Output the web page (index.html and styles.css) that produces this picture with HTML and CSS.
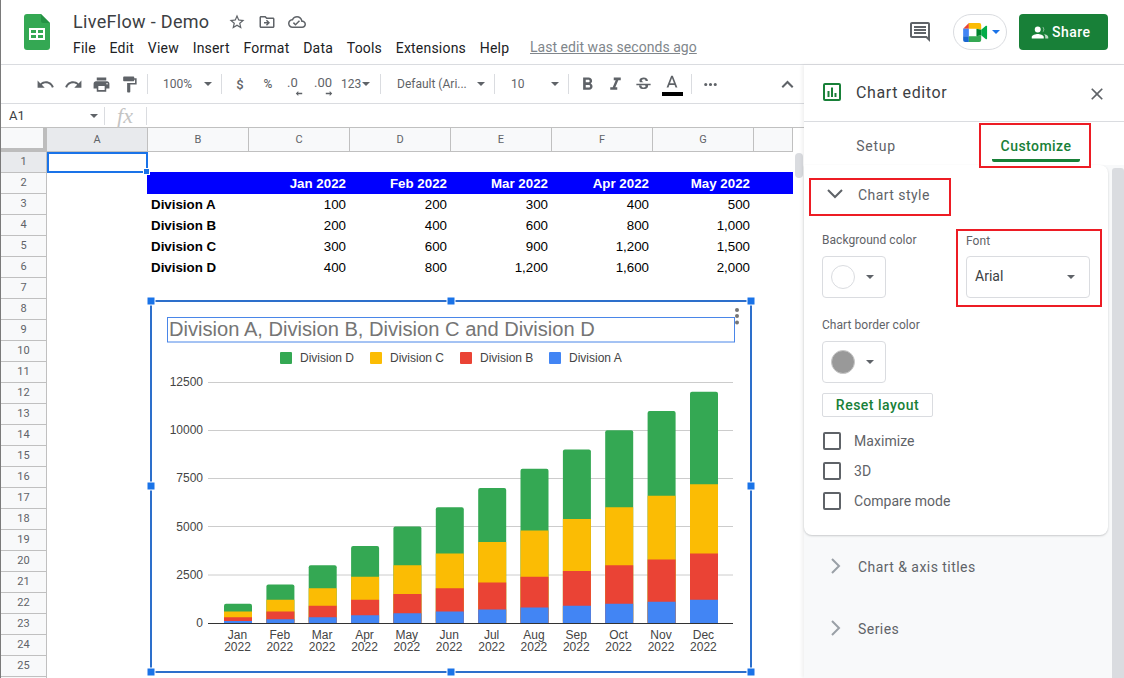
FILE: index.html
```html
<!DOCTYPE html>
<html lang="en">
<head>
<meta charset="utf-8">
<title>LiveFlow - Demo</title>
<link rel="stylesheet" href="styles.css">
</head>
<body>
<div class="app">
  <header class="topbar">
    <svg class="logo" viewBox="0 0 26 36"><path fill="#34a853" d="M3 0H17L26 9V33a3 3 0 0 1-3 3H3a3 3 0 0 1-3-3V3a3 3 0 0 1 3-3z"/><path fill="#188038" opacity=".55" d="M17 0L26 9H19a2 2 0 0 1-2-2z"/><path fill="#fff" fill-rule="evenodd" d="M5 14H21V26H5ZM7 16V19H12V16ZM14 16V19H19V16ZM7 21V24H12V21ZM14 21V24H19V21Z"/></svg>
    <div class="doc">
      <div class="title-row">
        <span class="doc-title">LiveFlow - Demo</span>
        <svg class="ic ic-star" viewBox="0 0 24 24"><path d="M22 9.24l-7.19-.62L12 2 9.19 8.63 2 9.24l5.46 4.73L5.82 21 12 17.27 18.18 21l-1.63-7.03L22 9.24zM12 15.4l-3.76 2.27 1-4.28-3.32-2.88 4.38-.38L12 6.1l1.71 4.04 4.38.38-3.32 2.88 1 4.28L12 15.4z"/></svg>
        <svg class="ic ic-move" viewBox="0 0 24 24"><path d="M20 6h-8l-2-2H4c-1.1 0-2 .9-2 2v12c0 1.1.9 2 2 2h16c1.1 0 2-.9 2-2V8c0-1.1-.9-2-2-2zm0 12H4V6h5.17l2 2H20v10z"/><path d="M12.16 12H8v2h4.16l-1.59 1.59L11.99 17 16 13l-4.01-4-1.42 1.41z"/></svg>
        <svg class="ic ic-cloud" viewBox="0 0 24 24"><path d="M19.35 10.04C18.67 6.59 15.64 4 12 4 9.11 4 6.6 5.64 5.35 8.04 2.34 8.36 0 10.91 0 14c0 3.31 2.69 6 6 6h13c2.76 0 5-2.24 5-5 0-2.64-2.05-4.78-4.65-4.96zM19 18H6c-2.21 0-4-1.79-4-4 0-2.05 1.53-3.76 3.56-3.97l1.07-.11.5-.95C8.08 7.14 9.94 6 12 6c2.62 0 4.88 1.86 5.39 4.43l.3 1.5 1.53.11c1.56.1 2.78 1.41 2.78 2.96 0 1.65-1.35 3-3 3zm-9-3.82l-2.09-2.09L6.5 13.5 10 17l6.01-6.01-1.41-1.41z"/></svg>
      </div>
      <nav class="menu">
        <span>File</span><span>Edit</span><span>View</span><span>Insert</span><span>Format</span><span>Data</span><span>Tools</span><span>Extensions</span><span>Help</span>
        <a class="last-edit">Last edit was seconds ago</a>
      </nav>
    </div>
    <div class="top-actions">
      <svg class="ic ic-comment" viewBox="0 0 24 24"><path d="M21.99 4c0-1.1-.89-2-1.99-2H4c-1.1 0-2 .9-2 2v12c0 1.1.9 2 2 2h14l4 4-.01-18zM20 4v13.17L18.83 16H4V4h16zM6 12h12v2H6zm0-3h12v2H6zm0-3h12v2H6z"/></svg>
      <div class="meet">
        <svg class="meet-logo" viewBox="0 0 26 20"><path fill="#ea4335" d="M6 0L0 6H6Z"/><path fill="#fbbc04" d="M6 0H17a2 2 0 0 1 2 2V7L14 6H6Z"/><path fill="#4285f4" d="M0 6H6V14H0Z"/><path fill="#1967d2" d="M0 14H6V20H2a2 2 0 0 1-2-2Z"/><path fill="#34a853" d="M6 14H14L19 13V18a2 2 0 0 1-2 2H6Z"/><path fill="#00832d" d="M14 6L19 7V13L14 14Z"/><path fill="#00ac47" d="M19 7L24 3a.8.8 0 0 1 1.2.6V16.400a.8.8 0 0 1-1.200.6L19 13Z"/></svg>
        <i class="caret caret-blue"></i>
      </div>
      <button class="share"><svg class="share-ic" viewBox="0 0 24 20"><path fill="#fff" opacity=".7" d="M15 2.200a4 4 0 0 1 0 7.600 5.500 5.500 0 0 0 0-7.600zM17 12c3 .5 6 1.800 6 4v2h-4v-2c0-1.600-.8-3-2-4z"/><path fill="#fff" d="M9 10a4 4 0 1 0 0-8 4 4 0 0 0 0 8zm0 2c-2.700 0-8 1.300-8 4v2h16v-2c0-2.700-5.300-4-8-4z"/></svg>Share</button>
    </div>
  </header>

  <div class="workspace">
    <main class="sheet">
      <div class="toolbar">
        <span class="tb"><svg class="tbi" viewBox="0 0 24 24"><path d="M12.500 8c-2.650 0-5.050.99-6.900 2.600L2 7v9h9l-3.620-3.620c1.390-1.160 3.160-1.880 5.120-1.880 3.540 0 6.550 2.310 7.600 5.500l2.370-.78C21.080 11.030 17.150 8 12.500 8z"/></svg></span>
        <span class="tb"><svg class="tbi" viewBox="0 0 24 24"><path d="M18.400 10.600C16.550 8.990 14.150 8 11.500 8c-4.650 0-8.580 3.030-9.960 7.220L3.900 16c1.050-3.190 4.050-5.500 7.600-5.500 1.950 0 3.730.72 5.120 1.880L13 16h9V7l-3.600 3.600z"/></svg></span>
        <span class="tb"><svg class="tbi" viewBox="0 0 24 24"><path d="M19 8H5c-1.660 0-3 1.340-3 3v6h4v4h12v-4h4v-6c0-1.660-1.340-3-3-3zm-3 11H8v-5h8v5zm3-7c-.55 0-1-.45-1-1s.45-1 1-1 1 .45 1 1-.45 1-1 1zm-1-9H6v4h12V3z"/></svg></span>
        <span class="tb"><svg class="tbi" viewBox="0 0 24 24"><path d="M18 4V3c0-.55-.45-1-1-1H5c-.55 0-1 .45-1 1v4c0 .55.45 1 1 1h12c.55 0 1-.45 1-1V6h1v4H9v11c0 .55.45 1 1 1h2c.55 0 1-.45 1-1v-9h8V4h-3z"/></svg></span>
        <i class="sep sep-a"></i>
        <span class="dd dd-zoom"><span>100%</span><i class="caret"></i></span>
        <i class="sep"></i>
        <span class="tb tb-first tb-text">$</span>
        <span class="tb tb-text tb-pct">%</span>
        <span class="tb dec dec-one"><span>.0</span><svg class="dec-arrow" viewBox="0 0 9 7"><path d="M3.500 0L0 3.500 3.500 7V4.500H9v-2H3.500z"/></svg></span>
        <span class="tb dec dec-two"><span>.00</span><svg class="dec-arrow" viewBox="0 0 9 7"><path d="M5.500 0L9 3.500 5.500 7V4.500H0v-2H5.500z"/></svg></span>
        <span class="num-fmt"><span>123</span><i class="caret"></i></span>
        <i class="sep sep-b"></i>
        <span class="dd dd-font"><span>Default (Ari...</span><i class="caret"></i></span>
        <i class="sep"></i>
        <span class="dd dd-size"><span>10</span><i class="caret"></i></span>
        <i class="sep"></i>
        <span class="tb tb-first"><svg class="tbi-lg" viewBox="0 0 24 24"><path d="M15.600 10.790c.97-.67 1.650-1.770 1.650-2.790 0-2.260-1.750-4-4-4H7v14h7.040c2.090 0 3.710-1.700 3.710-3.790 0-1.520-.86-2.820-2.150-3.420zM10 6.500h3c.83 0 1.500.67 1.500 1.500s-.67 1.500-1.500 1.500h-3v-3zm3.500 9H10v-3h3.500c.83 0 1.500.67 1.500 1.500s-.67 1.500-1.500 1.500z"/></svg></span>
        <span class="tb"><svg class="tbi-lg" viewBox="0 0 24 24"><path d="M10 4v3h2.210l-3.420 8H6v3h8v-3h-2.210l3.420-8H18V4z"/></svg></span>
        <span class="tb"><svg class="tbi" viewBox="0 0 24 24"><path d="M6.850 7.080C6.850 4.370 9.450 3 12.240 3c1.640 0 3 .49 3.900 1.280.77.65 1.460 1.730 1.460 3.240h-3.010c0-.31-.05-.59-.15-.85-.29-.86-1.200-1.280-2.250-1.280-1.860 0-2.340 1.020-2.340 1.700 0 .48.25.88.74 1.210.38.25.77.48 1.410.7H7.390c-.21-.34-.54-.89-.54-1.920zM21 13v-2H3v2h10.620c.5.220 1 .5 1 1.200 0 1-.81 1.440-2.280 1.440-1.540 0-2.930-.54-2.930-2.510H6.400c0 .55.08 1.130.24 1.580.81 2.290 3.240 3.090 5.600 3.090 2.350 0 5.520-.92 5.520-4.340 0-.36-.03-.46-.1-.46H21z"/></svg></span>
        <span class="tb tb-color"><svg class="tbi-a" viewBox="0 0 24 18"><path d="M11 1L5.500 15h2.250l1.120-3h6.250l1.120 3h2.250L13 1h-2zm-1.380 9L12 3.670 14.380 10H9.620z"/></svg><i class="color-bar"></i></span>
        <i class="sep sep-c"></i>
        <span class="tb tb-more"><svg class="tbi" viewBox="0 0 24 24"><path d="M6 10a2 2 0 1 0 0 4 2 2 0 0 0 0-4zm6 0a2 2 0 1 0 0 4 2 2 0 0 0 0-4zm6 0a2 2 0 1 0 0 4 2 2 0 0 0 0-4z"/></svg></span>
        <span class="tb tb-collapse"><svg class="tbi" viewBox="0 0 24 24"><path d="M12 7l-7.500 7.500 1.800 1.800L12 10.600l5.700 5.700 1.800-1.800z"/></svg></span>
      </div>

      <div class="formula">
        <span class="name-box"><span>A1</span><i class="caret"></i></span>
        <i class="f-sep"></i>
        <span class="fx">fx</span>
        <i class="f-sep"></i>
      </div>

      <div class="grid-area">
        <div class="grid">
          <div class="row col-heads">
            <div class="corner"></div><div class="ch ch-on">A</div><div class="ch">B</div><div class="ch">C</div><div class="ch">D</div><div class="ch">E</div><div class="ch">F</div><div class="ch">G</div><div class="ch"></div>
          </div>
          <div class="row"><div class="rh rh-on">1</div><div class="cell selected"><i class="sel-handle"></i></div></div>
          <div class="row band-row"><div class="rh">2</div><div class="cell"></div><div class="cell band band-first"></div><div class="cell band">Jan 2022</div><div class="cell band">Feb 2022</div><div class="cell band">Mar 2022</div><div class="cell band">Apr 2022</div><div class="cell band">May 2022</div><div class="cell band"></div></div>
          <div class="row"><div class="rh">3</div><div class="cell"></div><div class="cell label">Division A</div><div class="cell num">100</div><div class="cell num">200</div><div class="cell num">300</div><div class="cell num">400</div><div class="cell num">500</div></div>
          <div class="row"><div class="rh">4</div><div class="cell"></div><div class="cell label">Division B</div><div class="cell num">200</div><div class="cell num">400</div><div class="cell num">600</div><div class="cell num">800</div><div class="cell num">1,000</div></div>
          <div class="row"><div class="rh">5</div><div class="cell"></div><div class="cell label">Division C</div><div class="cell num">300</div><div class="cell num">600</div><div class="cell num">900</div><div class="cell num">1,200</div><div class="cell num">1,500</div></div>
          <div class="row"><div class="rh">6</div><div class="cell"></div><div class="cell label">Division D</div><div class="cell num">400</div><div class="cell num">800</div><div class="cell num">1,200</div><div class="cell num">1,600</div><div class="cell num">2,000</div></div>
          <div class="row"><div class="rh">7</div></div>
          <div class="row"><div class="rh">8</div></div>
          <div class="row"><div class="rh">9</div></div>
          <div class="row"><div class="rh">10</div></div>
          <div class="row"><div class="rh">11</div></div>
          <div class="row"><div class="rh">12</div></div>
          <div class="row"><div class="rh">13</div></div>
          <div class="row"><div class="rh">14</div></div>
          <div class="row"><div class="rh">15</div></div>
          <div class="row"><div class="rh">16</div></div>
          <div class="row"><div class="rh">17</div></div>
          <div class="row"><div class="rh">18</div></div>
          <div class="row"><div class="rh">19</div></div>
          <div class="row"><div class="rh">20</div></div>
          <div class="row"><div class="rh">21</div></div>
          <div class="row"><div class="rh">22</div></div>
          <div class="row"><div class="rh">23</div></div>
          <div class="row"><div class="rh">24</div></div>
          <div class="row"><div class="rh">25</div></div>
          <div class="row"><div class="rh"></div></div>
        </div>
        <div class="gutter"><i class="thumb"></i></div>

        <svg class="chart" viewBox="146 296 612 382">
          <rect class="frame" x="151" y="301" width="600" height="371"/>
          <rect class="title-box" x="167.500" y="317.500" width="567" height="24.500"/>
          <text class="c-title" x="169" y="336">Division A, Division B, Division C and Division D</text>
          <circle class="dots" cx="737" cy="310" r="2"/><circle class="dots" cx="737" cy="316" r="2"/><circle class="dots" cx="737" cy="322.500" r="2"/>
          <rect x="280" y="352" width="12" height="12" rx="1" fill="#34a853"/><text class="c-legend" x="300" y="362">Division D</text>
          <rect x="370" y="352" width="12" height="12" rx="1" fill="#fbbc04"/><text class="c-legend" x="390" y="362">Division C</text>
          <rect x="460" y="352" width="12" height="12" rx="1" fill="#ea4335"/><text class="c-legend" x="480" y="362">Division B</text>
          <rect x="549" y="352" width="12" height="12" rx="1" fill="#4285f4"/><text class="c-legend" x="569" y="362">Division A</text>
          <g class="gl"><path d="M208 382.500H733M208 430.500H733M208 478.500H733M208 526.500H733M208 575H733"/></g>
          <g class="c-axis-y">
            <text x="203" y="386">12500</text><text x="203" y="434">10000</text><text x="203" y="482">7500</text><text x="203" y="531">5000</text><text x="203" y="579">2500</text><text x="203" y="627">0</text>
          </g>
          <g fill="#34a853">
            <rect x="224" y="603.720" width="28" height="19.280" rx="2"/><rect x="266.400" y="584.440" width="28" height="38.560" rx="2"/><rect x="308.700" y="565.160" width="28" height="57.840" rx="2"/><rect x="351.100" y="545.880" width="28" height="77.120" rx="2"/><rect x="393.400" y="526.600" width="28" height="96.400" rx="2"/><rect x="435.800" y="507.320" width="28" height="115.680" rx="2"/><rect x="478.200" y="488.040" width="28" height="134.960" rx="2"/><rect x="520.500" y="468.760" width="28" height="154.240" rx="2"/><rect x="562.900" y="449.480" width="28" height="173.520" rx="2"/><rect x="605.200" y="430.200" width="28" height="192.800" rx="2"/><rect x="647.600" y="410.920" width="28" height="212.080" rx="2"/><rect x="690" y="391.640" width="28" height="231.360" rx="2"/>
          </g>
          <path fill="#fbbc04" d="M224 611.430h28V623h-28zM266.400 599.860h28V623h-28zM308.700 588.300h28V623h-28zM351.100 576.730h28V623h-28zM393.400 565.160h28V623h-28zM435.800 553.590h28V623h-28zM478.200 542.020h28V623h-28zM520.500 530.460h28V623h-28zM562.900 518.890h28V623h-28zM605.200 507.320h28V623h-28zM647.600 495.750h28V623h-28zM690 484.180h28V623h-28z"/>
          <path fill="#ea4335" d="M224 617.220h28V623h-28zM266.400 611.430h28V623h-28zM308.700 605.650h28V623h-28zM351.100 599.860h28V623h-28zM393.400 594.080h28V623h-28zM435.800 588.300h28V623h-28zM478.200 582.510h28V623h-28zM520.500 576.730h28V623h-28zM562.900 570.940h28V623h-28zM605.200 565.160h28V623h-28zM647.600 559.380h28V623h-28zM690 553.590h28V623h-28z"/>
          <path fill="#4285f4" d="M224 621.070h28V623h-28zM266.400 619.140h28V623h-28zM308.700 617.220h28V623h-28zM351.100 615.290h28V623h-28zM393.400 613.360h28V623h-28zM435.800 611.430h28V623h-28zM478.200 609.500h28V623h-28zM520.500 607.580h28V623h-28zM562.900 605.650h28V623h-28zM605.200 603.720h28V623h-28zM647.600 601.790h28V623h-28zM690 599.860h28V623h-28z"/>
          <path class="axis" d="M208 623.500H733"/>
          <g class="c-axis-x">
            <text x="237.500" y="639">Jan</text><text x="279.800" y="639">Feb</text><text x="322.100" y="639">Mar</text><text x="364.500" y="639">Apr</text><text x="406.800" y="639">May</text><text x="449.200" y="639">Jun</text><text x="491.600" y="639">Jul</text><text x="533.900" y="639">Aug</text><text x="576.300" y="639">Sep</text><text x="618.600" y="639">Oct</text><text x="661" y="639">Nov</text><text x="703.400" y="639">Dec</text>
            <text x="237.500" y="651">2022</text><text x="279.800" y="651">2022</text><text x="322.100" y="651">2022</text><text x="364.500" y="651">2022</text><text x="406.800" y="651">2022</text><text x="449.200" y="651">2022</text><text x="491.600" y="651">2022</text><text x="533.900" y="651">2022</text><text x="576.300" y="651">2022</text><text x="618.600" y="651">2022</text><text x="661" y="651">2022</text><text x="703.400" y="651">2022</text>
          </g>
          <g class="handles">
            <rect x="147" y="297" width="8" height="8"/><rect x="447" y="297" width="8" height="8"/><rect x="747" y="297" width="8" height="8"/><rect x="147" y="482" width="8" height="8"/><rect x="747" y="482" width="8" height="8"/><rect x="147" y="668" width="8" height="8"/><rect x="447" y="668" width="8" height="8"/><rect x="747" y="668" width="8" height="8"/>
          </g>
        </svg>
      </div>
    </main>

    <aside class="panel">
      <div class="panel-head">
        <svg class="chart-ic" viewBox="0 0 18 18"><rect x="1" y="1" width="16" height="16" rx="1" fill="none" stroke="#188038" stroke-width="2"/><path fill="#188038" d="M4.500 8h2v6h-2zM8 4.500h2V14H8zM11.500 10h2v4h-2z"/></svg>
        <span class="panel-title">Chart editor</span>
        <svg class="close" viewBox="0 0 24 24"><path d="M19 6.410L17.590 5 12 10.590 6.410 5 5 6.410 10.590 12 5 17.590 6.410 19 12 13.410 17.590 19 19 17.590 13.410 12z"/></svg>
      </div>
      <div class="tabs">
        <span class="tab tab-setup">Setup</span>
        <span class="tab tab-on">Customize</span>
      </div>
      <div class="panel-body">
        <div class="sections">
          <section class="card">
            <div class="sec-head sec-open">
              <svg class="chev-d" viewBox="0 0 16 10"><path d="M1 1l7 7 7-7"/></svg>
              <span>Chart style</span>
            </div>
            <div class="style-grid">
              <div class="field">
                <label class="f-label">Background color</label>
                <div class="swatch-btn"><i class="dot dot-white"></i><i class="caret"></i></div>
              </div>
              <div class="field field-font">
                <label class="f-label">Font</label>
                <div class="select"><span>Arial</span><i class="caret"></i></div>
              </div>
              <div class="field field-wide">
                <label class="f-label">Chart border color</label>
                <div class="swatch-btn"><i class="dot dot-grey"></i><i class="caret"></i></div>
              </div>
            </div>
            <button class="reset">Reset layout</button>
            <div class="checks">
              <div class="check"><i class="box"></i><span>Maximize</span></div>
              <div class="check"><i class="box"></i><span>3D</span></div>
              <div class="check"><i class="box"></i><span>Compare mode</span></div>
            </div>
          </section>
          <div class="sec-head sec-closed"><svg class="chev-r" viewBox="0 0 10 16"><path d="M1 1l7 7-7 7"/></svg><span>Chart &amp; axis titles</span></div>
          <div class="sec-head sec-closed"><svg class="chev-r" viewBox="0 0 10 16"><path d="M1 1l7 7-7 7"/></svg><span>Series</span></div>
        </div>
        <div class="panel-scroll"></div>
      </div>
      <i class="mark mark-tab"></i>
      <i class="mark mark-style"></i>
      <i class="mark mark-font"></i>
    </aside>
  </div>
</div>
</body>
</html>
```

FILE: styles.css
```css
* { box-sizing: border-box; }
html, body { margin: 0; padding: 0; }
body {
  width: 1124px;
  height: 678px;
  overflow: hidden;
  background: #fff;
  font-family: Roboto, "Liberation Sans", sans-serif;
  color: #3c4043;
}
button { font-family: inherit; }
i { display: block; font-style: normal; }

.app {
  display: flex;
  flex-direction: column;
  width: 1124px;
  height: 678px;
  border-left: 1px solid #7a7a7a;
}

/* Top bar */
.topbar {
  display: flex;
  flex: none;
  height: 65px;
  border-bottom: 1px solid #dadce0;
  align-items: flex-start;
}
.logo { flex: none; width: 26px; height: 36px; margin: 14px 0 0 23px; }
.doc { flex: none; margin-left: 23px; }
.title-row { display: flex; align-items: center; height: 24px; margin-top: 10px; }
.doc-title { font-size: 18px; line-height: 24px; color: #3c4043; width: 155px; letter-spacing: .32px; }
.ic { display: block; fill: #5f6368; }
.ic-star { width: 18px; height: 18px; }
.ic-move { width: 18px; height: 18px; margin-left: 12px; }
.ic-cloud { width: 18px; height: 18px; margin-left: 12px; }
.menu { display: flex; align-items: center; gap: 13.75px; height: 20px; margin-top: 4px; font-size: 14px; letter-spacing: .2px; color: #202124; }
.last-edit { margin: 0 0 2px 7px; font-size: 14px; color: #80868b; text-decoration: underline; letter-spacing: .04px; }
.top-actions { display: flex; align-items: center; margin-left: auto; margin-top: 14px; height: 36px; padding-right: 16px; }
.ic-comment { width: 24px; height: 24px; margin-right: 21px; }
.meet {
  display: flex; align-items: center;
  width: 54px; height: 36px;
  border: 1px solid #dadce0; border-radius: 18px;
  padding-left: 9px;
  margin-right: 12px;
}
.meet-logo { width: 25px; height: 19px; flex: none; }
.share {
  display: flex; align-items: center;
  width: 89px; height: 36px; border: 0; border-radius: 4px;
  background: #188038; color: #fff;
  font-size: 14px; font-weight: 500; letter-spacing: .5px; padding: 0 0 0 12px;
}
.share-ic { width: 18px; height: 15px; margin-right: 3px; }

.caret { width: 0; height: 0; border-left: 4px solid transparent; border-right: 4px solid transparent; border-top: 4px solid #5f6368; flex: none; }
.caret-blue { border-top-color: #1a73e8; margin-left: 4px; }

/* Work area */
.workspace { display: flex; flex: 1; min-height: 0; }
.sheet { display: flex; flex-direction: column; flex: none; width: 803px; min-height: 0; }

/* Toolbar */
.toolbar {
  display: flex; align-items: center; flex: none;
  height: 39px; padding-left: 30px;
  border-bottom: 1px solid #dadce0;
  color: #5f6368; font-size: 12px;
}
.tb { display: flex; align-items: center; justify-content: center; flex: none; width: 28px; height: 38px; position: relative; }
.tbi { width: 19px; height: 19px; fill: #5f6368; display: block; }
.tbi-lg { width: 21px; height: 21px; fill: #5f6368; display: block; }
.tb-first { margin-left: 4px; }
.tb-text { font-size: 13px; font-weight: 500; }
.tb-pct { font-size: 12px; }
.sep { flex: none; width: 1px; height: 20px; background: #dadce0; }
.sep-a { margin-left: 4px; }
.sep-b { margin-left: 8px; }
.sep-c { margin-left: 5px; }
.dd { display: flex; align-items: center; flex: none; height: 38px; padding-right: 9px; justify-content: space-between; }
.dd-zoom { width: 73px; padding-left: 15px; }
.dd-font { width: 113px; padding-left: 16px; }
.dd-size { width: 73px; padding-left: 16px; }
.dec { flex-direction: column; align-items: flex-start; font-size: 13px; line-height: 12px; padding-top: 4px; }
.dec-one { padding-left: 5px; }
.dec-two { padding-left: 4px; }
.dec-arrow { width: 8px; height: 5px; fill: #5f6368; display: block; margin-top: 2px; }
.dec-one .dec-arrow { margin-left: 8px; }
.dec-two .dec-arrow { margin-left: 11px; }
.num-fmt { display: flex; align-items: center; gap: 1px; margin-left: 3px; width: 31px; flex: none; }
.tb-color { flex-direction: column; margin-left: 1px; }
.tbi-a { width: 20px; height: 15px; fill: #5f6368; display: block; margin-top: 3px; }
.color-bar { width: 21px; height: 4px; background: #000; margin-top: 2px; }
.tb-more { margin-left: 4px; }
.tb-collapse { margin-left: auto; margin-right: 3px; }

/* Formula bar */
.formula {
  display: flex; align-items: center; flex: none;
  height: 24px; border-bottom: 1px solid #c0c0c0;
  padding-left: 8px; color: #3c4043;
}
.name-box { display: flex; align-items: center; justify-content: space-between; width: 90px; font-size: 13px; padding-right: 1px; }
.f-sep { width: 1px; height: 18px; background: #dadce0; margin-left: 5px; }
.fx { font-family: "Liberation Serif", serif; font-style: italic; font-size: 22px; color: #c4c4c4; width: 36px; padding-left: 4px; text-align: center; line-height: 20px; }

/* Grid */
.grid-area { position: relative; display: flex; flex: 1; min-height: 0; overflow: hidden; }
.grid { flex: none; width: 792px; overflow: hidden; }
.row { display: grid; grid-template-columns: 46px repeat(7, 101px) 39px; height: 21px; }
.col-heads { height: 24px; }
.corner { background: #f8f9fa; border-right: 4px solid #bdbdbd; border-bottom: 4px solid #bdbdbd; }
.ch {
  background: #f8f9fa; border-right: 1px solid #c0c0c0; border-bottom: 1px solid #c0c0c0;
  color: #5f6368; font-size: 11px; line-height: 23px; text-align: center;
}
.ch-on { background: #e8eaed; }
.rh {
  background: #f8f9fa; border-right: 1px solid #c0c0c0; border-bottom: 1px solid #c0c0c0;
  color: #5f6368; font-size: 11px; line-height: 20px; text-align: center;
}
.rh-on { background: #e8eaed; }
.cell { font-family: "Liberation Sans", Arial, sans-serif; font-size: 13.33px; line-height: 21px; color: #000; white-space: nowrap; }
.selected { position: relative; border: 2px solid #1a73e8; height: 21px; }
.sel-handle { position: absolute; right: -4px; bottom: -4px; width: 7px; height: 7px; background: #1a73e8; border: 1px solid #fff; }
.band { background: #00f; color: #fff; font-weight: 700; text-align: right; padding-right: 4px; box-shadow: 0 -1px 0 #00f; }
.band-first { box-shadow: 0 -1px 0 #00f, -1px 0 0 #00f, -1px -1px 0 #00f; }
.label { font-weight: 700; padding-left: 3px; }
.num { text-align: right; padding-right: 4px; }
.gutter { flex: none; width: 11px; padding: 25px 1px 0 2px; }
.thumb { width: 8px; height: 25px; background: #dadce0; border-radius: 4px; }

/* Chart */
.chart { position: absolute; left: 145px; top: 168px; width: 612px; height: 382px; overflow: hidden; font-family: "Liberation Sans", Arial, sans-serif; }
.frame { fill: #fff; stroke: #2d6fcb; stroke-width: 2; }
.title-box { fill: none; stroke: #4a86e8; stroke-width: 1; }
.c-title { font-size: 20.13px; fill: #757575; }
.dots { fill: #757575; }
.c-legend { font-size: 12px; fill: #444; }
.gl path { stroke: #ccc; stroke-width: 1; fill: none; }
.c-axis-y text { font-size: 12px; fill: #444; text-anchor: end; }
.c-axis-x text { font-size: 12px; fill: #444; text-anchor: middle; }
.axis { stroke: #333; stroke-width: 1; fill: none; }
.handles rect { fill: #1a73e8; stroke: #fff; stroke-width: 1; }

/* Chart editor */
.panel { position: relative; display: flex; flex-direction: column; flex: none; width: 320px; min-height: 0; background: #fff; box-shadow: -2px 0 3px rgba(60,64,67,.08); }
.panel-head { display: flex; align-items: center; flex: none; height: 57px; border-bottom: 1px solid #dadce0; padding: 0 17px 2px 19px; }
.chart-ic { width: 18px; height: 18px; flex: none; }
.panel-title { font-size: 16px; color: #3c4043; margin-left: 15px; letter-spacing: .6px; }
.close { width: 20px; height: 20px; fill: #5f6368; margin-left: auto; margin-top: 3px; }
.tabs { display: flex; flex: none; height: 43px; font-size: 14px; color: #5f6368; }
.tab { display: flex; align-items: center; justify-content: center; }
.tab-setup { width: 144px; height: 48px; letter-spacing: .7px; }
.tab-on { width: 88px; height: 40px; margin-left: 44px; padding-top: 11px; color: #188038; font-weight: 500; letter-spacing: .45px; border-bottom: 3px solid #188038; border-radius: 0 0 2px 2px; }
.panel-body { display: flex; flex: 1; min-height: 0; background: #f8f9fa; }
.sections { flex: none; width: 308px; }
.card {
  width: 304px; height: 370px; background: #fff;
  border-radius: 0 8px 8px 8px;
  box-shadow: 0 1px 2px rgba(60,64,67,.25);
}
.sec-head { display: flex; align-items: center; font-size: 14px; color: #5f6368; letter-spacing: .45px; }
.sec-head span { padding-top: 2px; }
.sec-open { height: 58px; padding-left: 23px; }
.sec-open span { margin-left: 15px; }
.sec-closed { height: 62px; padding-left: 27px; }
.sec-closed span { margin-left: 17px; }
.chev-d { width: 16px; height: 10px; fill: none; stroke: #5f6368; stroke-width: 2; }
.chev-r { width: 10px; height: 16px; fill: none; stroke: #9aa0a6; stroke-width: 2; }
.style-grid { display: grid; grid-template-columns: 144px 124px; row-gap: 19px; padding: 9px 0 0 18px; }
.field { display: flex; flex-direction: column; gap: 8px; }
.field-wide { grid-column: 1 / -1; }
.f-label { font-size: 12px; line-height: 16px; color: #5f6368; letter-spacing: .05px; }
.field-font .f-label { position: relative; top: 1px; }
.swatch-btn { display: flex; align-items: center; width: 64px; height: 42px; border: 1px solid #dadce0; border-radius: 4px; padding-left: 8px; gap: 11px; }
.dot { width: 24px; height: 24px; border-radius: 50%; flex: none; }
.dot-white { background: #fff; border: 1px solid #dadce0; }
.dot-grey { background: #999; border: 1px solid #c8c8c8; }
.select { display: flex; align-items: center; justify-content: space-between; height: 42px; border: 1px solid #dadce0; border-radius: 4px; padding: 0 14px 2px 8px; font-size: 14px; color: #3c4043; }
.select .caret { margin-top: 2px; }
.reset { display: block; width: 111px; height: 24px; margin: 10px 0 0 18px; padding: 0; background: #fff; border: 1px solid #dadce0; border-radius: 2px; color: #188038; font-size: 14px; font-weight: 500; letter-spacing: .5px; }
.checks { margin: 9px 0 0 19px; }
.check { display: flex; align-items: center; height: 30px; font-size: 14px; color: #5f6368; letter-spacing: .05px; }
.box { width: 18px; height: 18px; border: 2px solid #5f6368; border-radius: 2px; margin-right: 13px; flex: none; }
.panel-scroll { flex: none; width: 12px; margin-top: 3px; background: #dadce0; border-radius: 3px 3px 0 0; }

/* Red annotations drawn over the screenshot */
.mark { position: absolute; border: 2px solid #ed1c24; pointer-events: none; }
.mark-tab { left: 175px; top: 58px; width: 112px; height: 45px; }
.mark-style { left: 5px; top: 113px; width: 142px; height: 38px; }
.mark-font { left: 152px; top: 164px; width: 146px; height: 78px; }
```
